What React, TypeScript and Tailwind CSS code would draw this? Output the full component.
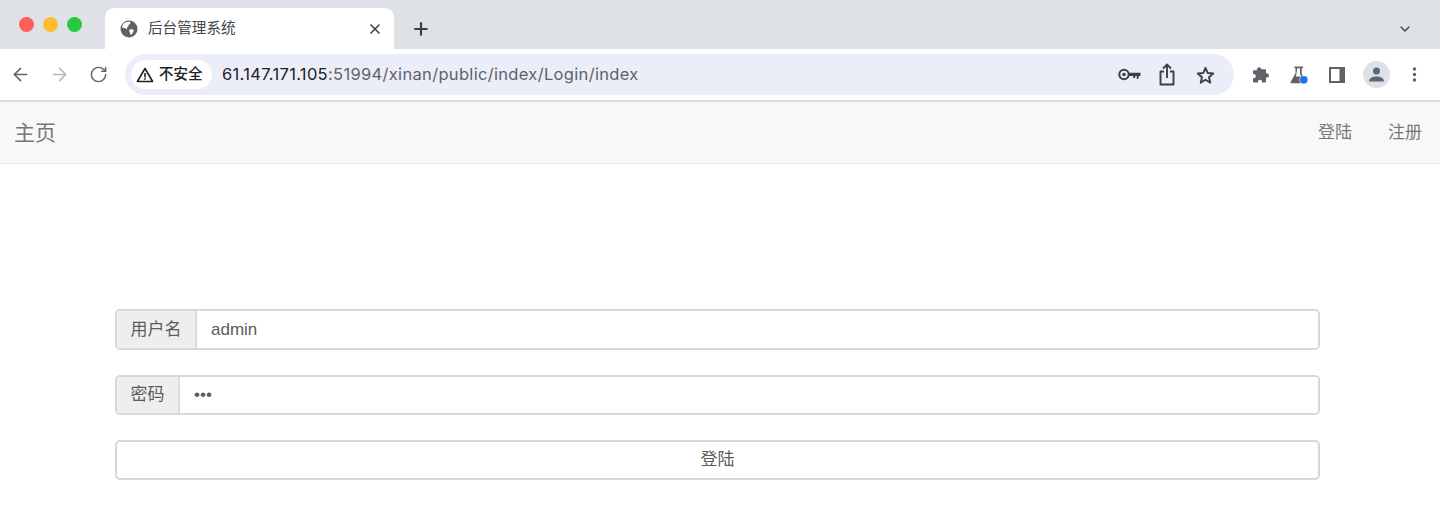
import React from 'react';
import { ArrowLeft, ArrowRight, RotateCw, X, Plus, ChevronDown, MoreVertical } from 'lucide-react';

const cjk = "font-['Helvetica_Neue','Liberation_Sans','Noto_Sans_CJK_SC',sans-serif]";

function Globe() {
  return (
    <svg width="18" height="18" viewBox="0 0 18 18" className="shrink-0">
      <circle cx="9" cy="9" r="8.5" fill="#5f6368" />
      <path d="M5 2.500c2-.8 4.500-.9 5.500-.3.2 1-.8 1.600-1.500 2.200-.6.600-.2 1.500-1 2-.9.500-1.200 1.200-.8 2 .2.800-1 .600-1.700.2C4.300 8 3 7.700 2 7.600 2.300 5.500 3.300 3.600 5 2.500zM10 9.500c1.200-.6 3-.3 3.600.5.500.7-.2 1.400-.6 2-.4.800-.6 1.700-1.500 2.500-.8.400-1.300-.2-1.300-1-.1-.8-.7-1.400-.9-2.200-.2-.8 0-1.400.7-1.800z" fill="#fff" />
    </svg>
  );
}

function WarnIcon() {
  return (
    <svg width="18" height="16" viewBox="0 0 18 16" className="shrink-0">
      <path d="M9 1.500 16.600 14.500H1.400Z" fill="none" stroke="#202124" strokeWidth="1.600" strokeLinejoin="round" />
      <path d="M8.200 6h1.600v4.500H8.200zM8.200 11.300h1.600v1.500H8.200z" fill="#202124" />
    </svg>
  );
}

function KeyIcon() {
  return (
    <svg width="23" height="13" viewBox="0 0 23 13">
      <circle cx="6" cy="6.500" r="4.700" fill="none" stroke="#3c4043" strokeWidth="2" />
      <circle cx="6" cy="6.500" r="1.800" fill="#3c4043" />
      <path d="M10.500 4.700h12v3.400h-1.800v2.600h-2V8.100h-1.500v2h-2V8.100h-4.700z" fill="#3c4043" />
    </svg>
  );
}

function ShareIcon() {
  return (
    <svg width="16" height="23" viewBox="0 0 16 23">
      <path d="M5 8.500H1.500v13h13v-13H11" fill="none" stroke="#3c4043" strokeWidth="1.900" strokeLinejoin="round" />
      <path d="M8 15V2M4 5.500 8 1.500l4 4" fill="none" stroke="#3c4043" strokeWidth="1.900" />
    </svg>
  );
}

function StarIcon() {
  return (
    <svg width="19" height="18" viewBox="0 0 19 18">
      <path d="M9.500 1.800 11.700 7l5.600.5-4.300 3.700 1.300 5.500-4.800-2.900-4.800 2.900L6 11.200 1.700 7.500 7.300 7z" fill="none" stroke="#3c4043" strokeWidth="1.900" strokeLinejoin="round" />
    </svg>
  );
}

function PuzzleIcon() {
  return (
    <svg width="18" height="18" viewBox="0 0 18 18">
      <path d="M7 1.200c1.300 0 2.200.9 2.200 2H13a1 1 0 0 1 1 1v3.200c1.300-.4 3 .4 3 2s-1.700 2.500-3 2V15.500a1 1 0 0 1-1 1h-3c.3-1.300-.5-2.700-2-2.700s-2.300 1.400-2 2.700H2a1 1 0 0 1-1-1v-3.300c1.400.4 2.800-.5 2.800-2S2.400 7.800 1 8.200V5.200a1 1 0 0 1 1-1h3c-.1-1.600.7-3 2-3z" fill="#5f6368" />
    </svg>
  );
}

function LabsIcon() {
  return (
    <svg width="20" height="20" viewBox="0 0 20 20">
      <path d="M5.500 1.500h8.500v1.800h-1.300v5L16 17a1 1 0 0 1-1 1.300H2.500a1 1 0 0 1-.9-1.400L6.500 8.300v-5h-1z" fill="#5f6368" />
      <path d="M8.300 3.300h2.600v5.200l1.300 3H7z" fill="#fff" />
      <circle cx="14.800" cy="14.800" r="4.100" fill="#1a73e8" stroke="#fff" strokeWidth="0.600" />
    </svg>
  );
}

function SidePanelIcon() {
  return (
    <svg width="18" height="18" viewBox="0 0 18 18">
      <path d="M1 1h16v16H1z" fill="#5f6368" />
      <path d="M3 3h8.500v12H3z" fill="#fff" />
    </svg>
  );
}

function AvatarIcon() {
  return (
    <div className="w-[27px] h-[27px] rounded-full bg-[#dee1e6] flex items-center justify-center">
      <svg width="17" height="17" viewBox="0 0 17 17">
        <circle cx="8.500" cy="5" r="3.500" fill="#5a6578" />
        <path d="M1 15.500c0-3.300 3.500-5 7.500-5s7.500 1.700 7.500 5z" fill="#5a6578" />
      </svg>
    </div>
  );
}

function InputRow({ label, value, labelWidth, height }: { label: string; value: string; labelWidth: string; height: string }) {
  return (
    <div className={`flex ${height} rounded-[5px] border-2 border-[#d8d8d8] overflow-hidden`}>
      <div className={`${labelWidth} shrink-0 bg-[#eeeeee] border-r-2 border-[#dcdcdc] flex items-center justify-center text-[17px] text-[#5c5c5c]`}>
        {label}
      </div>
      <input
        readOnly
        value={value}
        className="flex-1 px-[14px] text-[17px] text-[#5c5c5c] outline-none bg-white"
      />
    </div>
  );
}

function App() {
  return (
    <div className={`w-[1440px] h-[526px] overflow-hidden bg-white ${cjk}`}>
      {/* tab strip */}
      <div className="relative h-[49px] bg-[#dee1e6] flex items-end pl-[105px]">
        <div className="absolute left-[19px] top-[17px] flex gap-[9px]">
          <span className="w-[15px] h-[15px] rounded-full bg-[#ff5f57]" />
          <span className="w-[15px] h-[15px] rounded-full bg-[#febc2e]" />
          <span className="w-[15px] h-[15px] rounded-full bg-[#28c840]" />
        </div>
        <div className="w-[289px] h-[41px] bg-white rounded-t-[9px] flex items-center pl-[15px] pr-[11px]">
          <Globe />
          <span className="ml-[10px] text-[14.600px] text-[#45474a] flex-1">后台管理系统</span>
          <X size={16} strokeWidth={2.400} color="#3c4043" />
        </div>
        <div className="ml-[17px] mb-[10px]">
          <Plus size={20} strokeWidth={2.600} color="#3c4043" />
        </div>
        <div className="ml-auto mr-[27px] mb-[12px]">
          <ChevronDown size={16} strokeWidth={2} color="#3c4043" />
        </div>
      </div>

      {/* toolbar */}
      <div className="h-[51px] bg-white flex items-center pl-[10px]">
        <ArrowLeft size={21} strokeWidth={1.800} color="#5f6368" />
        <ArrowRight size={21} strokeWidth={1.800} color="#b5b7ba" className="ml-[18px]" />
        <RotateCw size={19} strokeWidth={1.800} color="#5f6368" className="ml-[19px]" />
        <div className="ml-[17px] w-[1109px] h-[41px] rounded-full bg-[#ebeef8] flex items-center pl-[6px] pr-[19px]">
          <div className="h-[29px] w-[81px] rounded-full bg-white flex items-center pl-[5px] gap-[5px]">
            <WarnIcon />
            <span className="text-[14.500px] text-[#202124] font-medium">不安全</span>
          </div>
          <div className="ml-[10px] text-[16.500px] text-[#5f6368] font-['Inter',sans-serif] flex-1 tracking-[0.320px]">
            <span className="text-[#202124]">61.147.171.105</span>:51994/xinan/public/index/Login/index
          </div>
          <KeyIcon />
          <div className="ml-[18px]"><ShareIcon /></div>
          <div className="ml-[21px]"><StarIcon /></div>
        </div>
        <div className="ml-[18px]"><PuzzleIcon /></div>
        <div className="ml-[19px]"><LabsIcon /></div>
        <div className="ml-[19px]"><SidePanelIcon /></div>
        <div className="ml-[17px]"><AvatarIcon /></div>
        <MoreVertical size={19} strokeWidth={2.400} color="#5f6368" className="ml-[15px]" />
      </div>

      {/* navbar */}
      <div className="h-[64px] bg-[#f8f8f8] border-t-2 border-b border-t-[#dcdcdc] border-b-[#e7e7e7] flex items-center pl-[14px] pr-[18px]">
        <a className="text-[21px] text-[#777]">主页</a>
        <a className="ml-auto text-[17px] text-[#777]">登陆</a>
        <a className="ml-[36px] text-[17px] text-[#777]">注册</a>
      </div>

      {/* form */}
      <div className="pt-[145px] px-[115px] w-[1435px] flex flex-col gap-[25px]">
        <InputRow label="用户名" value="admin" labelWidth="w-[80px]" height="h-[41px]" />
        <InputRow label="密码" value="•••" labelWidth="w-[63px]" height="h-[40px]" />
        <button className="h-[40px] rounded-[5px] border-2 border-[#d8d8d8] bg-white text-[17px] text-[#5c5c5c]">
          登陆
        </button>
      </div>
    </div>
  );
}

export default App;
